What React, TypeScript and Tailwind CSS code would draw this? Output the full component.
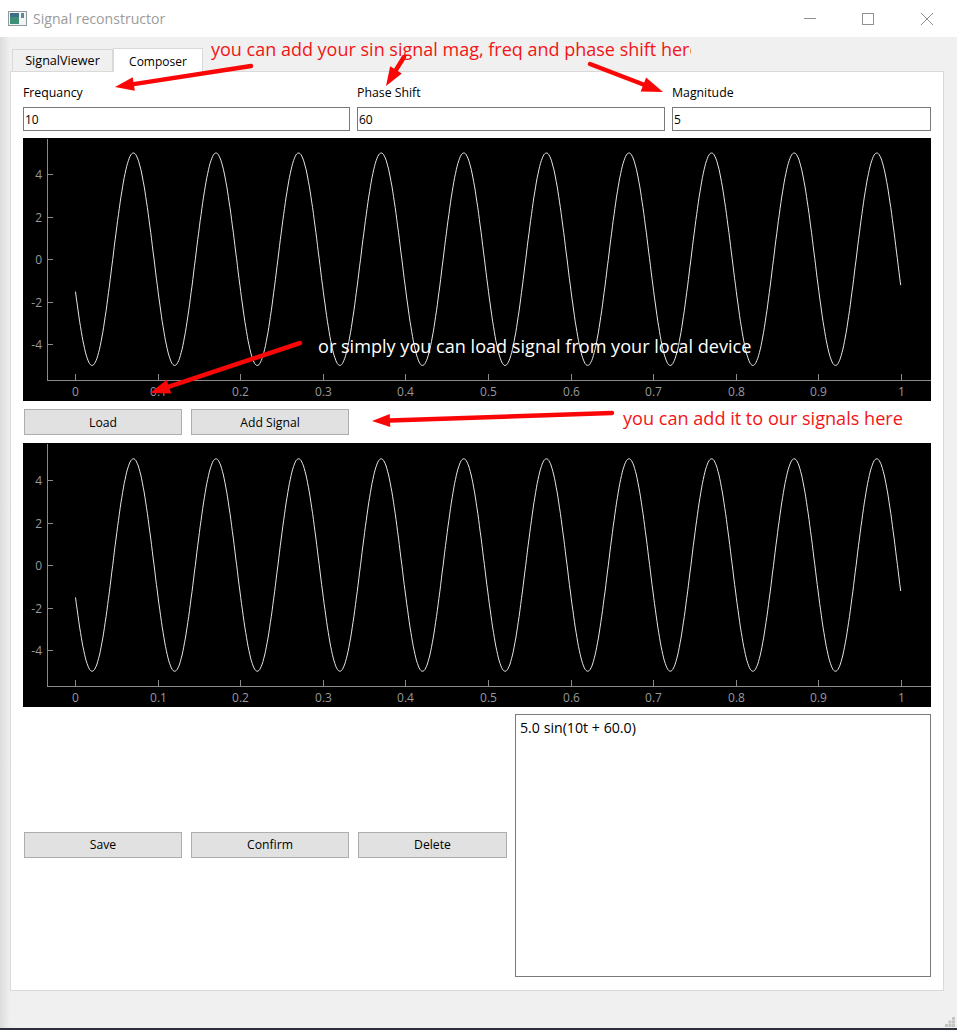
import React from "react";

const sans = "font-['Open_Sans','Noto_Sans',sans-serif]";

const xTicks = [0, 0.1, 0.2, 0.3, 0.4, 0.5, 0.6, 0.7, 0.8, 0.9, 1];
const yTicks = [4, 2, 0, -2, -4];

// same signal the app plots: 5 sin(2*pi*10t + 60), t in [0, 0.999]
function sinePoints(zero: number) {
  const pts: string[] = [];
  for (let i = 0; i < 1000; i++) {
    const t = i / 1000;
    const y = 5 * Math.sin(2 * Math.PI * 10 * t + 60);
    pts.push(`${(52.5 + t * 826).toFixed(1)},${(zero - y * 21.25).toFixed(1)}`);
  }
  return pts.join(" ");
}

function Plot({ height, axisY, zeroY }: { height: number; axisY: number; zeroY: number }) {
  return (
    <svg width={908} height={height} className="block shrink-0 bg-black" style={{ fontFamily: "'Open Sans', sans-serif" }}>
      <line x1={24.5} y1={1} x2={24.5} y2={axisY} stroke="#8a8a8a" />
      <line x1={24} y1={axisY + 0.5} x2={908} y2={axisY + 0.5} stroke="#8a8a8a" />
      {yTicks.map(v => {
        const y = Math.round(zeroY - v * 21.25) + 0.5;
        return (
          <g key={v}>
            <line x1={24} x2={30} y1={y} y2={y} stroke="#8a8a8a" />
            <text x={19} y={y + 4} textAnchor="end" fontSize={12} fill="#969a9f">
              {v}
            </text>
          </g>
        );
      })}
      {xTicks.map(v => {
        const x = Math.round(52 + v * 826) + 0.5;
        return (
          <g key={v}>
            <line x1={x} x2={x} y1={axisY - 6} y2={axisY} stroke="#8a8a8a" />
            <text x={x} y={axisY + 16} textAnchor="middle" fontSize={12} fill="#969a9f">
              {v}
            </text>
          </g>
        );
      })}
      <polyline points={sinePoints(zeroY)} fill="none" stroke="#e6e6e6" strokeWidth={1} />
    </svg>
  );
}

function Btn({ label, w }: { label: string; w: string }) {
  return (
    <button className={`${w} h-[26px] shrink-0 border border-[#adadad] bg-[#e1e1e1] pt-[2px] text-[12.2px] text-black`}>
      {label}
    </button>
  );
}

function Field({ label, value, w }: { label: string; value: string; w: string }) {
  return (
    <div className={`${w} shrink-0`}>
      <div className="h-[35px] pt-[12px] text-[12.3px] leading-[17px] text-black">{label}</div>
      <input
        readOnly
        value={value}
        className="block h-[24px] w-full border border-[#7a7a7a] bg-white px-[1px] text-[12px] text-black outline-none"
      />
    </div>
  );
}

// red annotation arrow, tail to tip
function Arrow({ x1, y1, x2, y2, head = 26, width = 4.5 }: { x1: number; y1: number; x2: number; y2: number; head?: number; width?: number }) {
  const len = Math.hypot(x2 - x1, y2 - y1);
  const ux = (x2 - x1) / len;
  const uy = (y2 - y1) / len;
  const bx = x2 - ux * head;
  const by = y2 - uy * head;
  const hw = head * 0.36;
  return (
    <g>
      <line x1={x1} y1={y1} x2={bx} y2={by} stroke="#fb0606" strokeWidth={width} strokeLinecap="round" />
      <polygon
        points={`${x2},${y2} ${bx - uy * hw},${by + ux * hw} ${bx + uy * hw},${by - ux * hw}`}
        fill="#fb0606"
      />
    </g>
  );
}

export default function App() {
  return (
    <div className={`relative flex h-[1030px] w-[957px] flex-col overflow-hidden bg-[#f0f0f0] ${sans}`}>
      {/* title bar */}
      <div className="flex h-[37px] shrink-0 items-center bg-white pl-[8px]">
        <svg width={19} height={15} viewBox="0 0 19 15" className="shrink-0">
          <rect x={0.5} y={0.5} width={18} height={14} fill="#f4f4f4" stroke="#8e9aa0" />
          <rect x={2} y={2} width={9} height={11} fill="#3f8f78" />
          <rect x={2} y={2} width={9} height={4} fill="#3f6f85" />
          <rect x={13} y={2} width={3} height={5} fill="#5f8a90" />
        </svg>
        <span className="ml-[6px] text-[14.1px] text-[#9b9b9b]">Signal reconstructor</span>
        <div className="ml-auto flex items-center pr-[24px]">
          <div className="h-px w-[12px] bg-[#8f8f8f]" />
          <div className="ml-[46px] h-[12px] w-[12px] border border-[#8f8f8f]" />
          <svg width={12} height={12} viewBox="0 0 12 12" className="ml-[47px]">
            <path d="M0 0 L12 12 M12 0 L0 12" stroke="#8f8f8f" fill="none" />
          </svg>
        </div>
      </div>

      {/* window edge shade */}
      <div className="absolute bottom-0 left-0 top-[37px] w-[10px] bg-gradient-to-r from-[#dcdcdc] to-[#f0f0f0]" />

      {/* tabs */}
      <div className="relative z-10 flex h-[34px] shrink-0 items-end pl-[12px]">
        <div className="flex h-[22px] w-[101px] items-center justify-center border border-b-0 border-[#d9d9d9] bg-[#f0f0f0] pt-[2px] text-[12.6px] text-black">
          SignalViewer
        </div>
        <div className="-mb-px flex h-[24px] w-[90px] items-center justify-center border border-b-0 border-[#d9d9d9] bg-white pt-[2px] text-[12px] text-black">
          Composer
        </div>
      </div>

      {/* tab page */}
      <div className="relative ml-[10px] flex h-[920px] w-[934px] flex-col border border-[#d9d9d9] bg-white pl-[12px]">
        <div className="flex gap-[7px]">
          <Field label="Frequancy" value="10" w="w-[327px]" />
          <Field label="Phase Shift" value="60" w="w-[308px]" />
          <Field label="Magnitude" value="5" w="w-[259px]" />
        </div>

        <div className="mt-[7px]">
          <Plot height={263} axisY={242} zeroY={121.2} />
        </div>

        <div className="mt-[8px] flex gap-[9px] pl-px">
          <Btn label="Load" w="w-[158px]" />
          <Btn label="Add Signal" w="w-[158px]" />
        </div>

        <div className="mt-[8px]">
          <Plot height={264} axisY={243} zeroY={122} />
        </div>

        <div className="mt-[7px] flex h-[263px]">
          <div className="flex w-[492px] shrink-0 items-center gap-[9px] pb-[2px] pl-px">
            <Btn label="Save" w="w-[158px]" />
            <Btn label="Confirm" w="w-[158px]" />
            <Btn label="Delete" w="w-[149px]" />
          </div>
          <div className="h-full w-[416px] border border-[#7a7a7a] bg-white px-[4px] py-[3px] text-[14.2px] leading-[19px] text-black">
            5.0 sin(10t + 60.0)
          </div>
        </div>
      </div>

      {/* notes drawn on top of the screenshot */}
      <svg width={957} height={1030} className="pointer-events-none absolute left-0 top-0 z-20">
        <Arrow x1={251} y1={66} x2={115} y2={87} head={19} />
        <Arrow x1={404} y1={57} x2={386} y2={86} head={19} />
        <Arrow x1={590} y1={64} x2={663} y2={92} head={21} />
        <Arrow x1={300} y1={343} x2={150} y2={393} head={20} />
        <Arrow x1={612} y1={413} x2={372} y2={421} head={18} />
      </svg>
      <div className="absolute left-[211px] top-[37px] z-20 w-[480px] overflow-hidden whitespace-nowrap text-[18px] leading-[24px] text-[#f21515]">
        you can add your sin signal mag, freq and phase shift here
      </div>
      <div className="absolute left-[318px] top-[334px] z-20 whitespace-nowrap text-[18.1px] leading-[24px] text-white">
        or simply you can load signal from your local device
      </div>
      <div className="absolute left-[623px] top-[406px] z-20 whitespace-nowrap text-[18.1px] leading-[24px] text-[#f21515]">
        you can add it to our signals here
      </div>

      {/* size grip */}
      <svg width={10} height={10} viewBox="0 0 10 10" className="absolute bottom-[3px] right-[2px]">
        <path d="M7 0h3v3H7zM3.500 3.500h3v3h-3zM7 3.500h3v3H7zM0 7h3v3H0zM3.500 7h3v3h-3zM7 7h3v3H7z" fill="#c4c4c4" />
      </svg>
      <div className="absolute bottom-0 left-0 h-[2px] w-full bg-[#2b303b]" />
    </div>
  );
}
